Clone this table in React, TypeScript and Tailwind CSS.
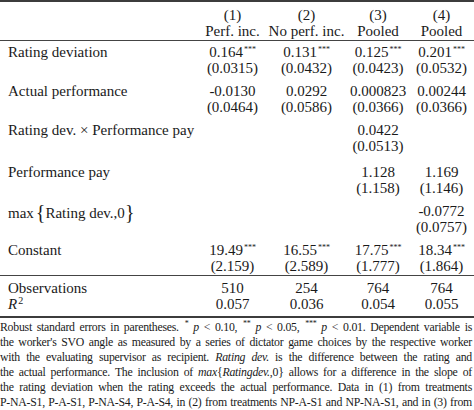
import React from "react";

const Star = ({ n }: { n: number }) => (
  <span className="relative -top-[5px] text-[8px] leading-none ml-[1px]">{"*".repeat(n)}</span>
);

type Cell = { v?: React.ReactNode; se?: string };

const Pair = ({ label, cells, extra }: { label: React.ReactNode; cells: Cell[]; extra?: string }) => (
  <div className={`grid grid-cols-[196px_73px_75px_68px_59px] h-[39px] ${extra ?? ""}`}>
    <div className="pl-2 h-4 leading-4 whitespace-nowrap">{label}</div>
    {cells.map((c, i) => (
      <div key={i} className="flex flex-col items-center">
        <div className="h-4 leading-4 whitespace-nowrap">{c.v}</div>
        <div className="h-4 leading-4 whitespace-nowrap">{c.se}</div>
      </div>
    ))}
  </div>
);

const NoteLine = ({ children, last }: { children: React.ReactNode; last?: boolean }) => (
  <div className={`h-[15px] leading-[15px] whitespace-nowrap ${last ? "" : "text-justify [text-align-last:justify]"}`}>
    {children}
  </div>
);

export default function App() {
  return (
    <div className="w-[474px] h-[410px] overflow-hidden bg-white text-[#1a1a1a] font-['Liberation_Serif',serif]">
      <div className="h-[2px] bg-[#3c3c3c]" />
      <div className="text-[15px]">
        <div className="grid grid-cols-[196px_73px_75px_68px_59px] pt-[6px] h-[38px]">
          <div />
          {[
            ["(1)", "Perf. inc."],
            ["(2)", "No perf. inc."],
            ["(3)", "Pooled"],
            ["(4)", "Pooled"],
          ].map(([a, b]) => (
            <div key={a} className="flex flex-col items-center">
              <div className="h-[15px] leading-[15px] whitespace-nowrap">{a}</div>
              <div className="h-4 leading-4 whitespace-nowrap">{b}</div>
            </div>
          ))}
        </div>
        <div className="h-px bg-[#444]" />
        <div className="pt-[3px]">
          <Pair
            label="Rating deviation"
            cells={[
              { v: <>0.164<Star n={3} /></>, se: "(0.0315)" },
              { v: <>0.131<Star n={3} /></>, se: "(0.0432)" },
              { v: <>0.125<Star n={3} /></>, se: "(0.0423)" },
              { v: <>0.201<Star n={3} /></>, se: "(0.0532)" },
            ]}
          />
          <Pair
            label="Actual performance"
            cells={[
              { v: "-0.0130", se: "(0.0464)" },
              { v: "0.0292", se: "(0.0586)" },
              { v: "0.000823", se: "(0.0366)" },
              { v: "0.00244", se: "(0.0366)" },
            ]}
          />
          <Pair
            label="Rating dev. × Performance pay"
            extra="h-[42px]"
            cells={[{}, {}, { v: "0.0422", se: "(0.0513)" }, {}]}
          />
          <Pair
            label="Performance pay"
            cells={[{}, {}, { v: "1.128", se: "(1.158)" }, { v: "1.169", se: "(1.146)" }]}
          />
          <Pair
            label={
              <span className="inline-flex items-center">
                max<span className="text-[20px] leading-none font-light relative -top-[1px] ml-[2px]">{"{"}</span>Rating dev.,0
                <span className="text-[20px] leading-none font-light relative -top-[1px]">{"}"}</span>
              </span>
            }
            cells={[{}, {}, {}, { v: "-0.0772", se: "(0.0757)" }]}
          />
          <div className="grid grid-cols-[196px_73px_75px_68px_59px] h-[33px]">
            <div className="pl-2 h-4 leading-4">Constant</div>
            {[
              ["19.49", "(2.159)"],
              ["16.55", "(2.589)"],
              ["17.75", "(1.777)"],
              ["18.34", "(1.864)"],
            ].map(([a, b]) => (
              <div key={a} className="flex flex-col items-center">
                <div className="h-4 leading-4 whitespace-nowrap">
                  {a}
                  <Star n={3} />
                </div>
                <div className="h-4 leading-4 whitespace-nowrap">{b}</div>
              </div>
            ))}
          </div>
        </div>
        <div className="h-px bg-[#444]" />
        <div className="grid grid-cols-[196px_73px_75px_68px_59px] pt-[4px] h-[40px]">
          <div className="pl-2">
            <div className="h-4 leading-4">Observations</div>
            <div className="h-4 leading-4">
              <i>R</i>
              <span className="relative -top-[5px] text-[10px] leading-none ml-[1px]">2</span>
            </div>
          </div>
          {[
            ["510", "0.057"],
            ["254", "0.036"],
            ["764", "0.054"],
            ["764", "0.055"],
          ].map(([a, b], i) => (
            <div key={i} className="flex flex-col items-center">
              <div className="h-4 leading-4">{a}</div>
              <div className="h-4 leading-4">{b}</div>
            </div>
          ))}
        </div>
        <div className="h-[2px] bg-[#3c3c3c]" />
      </div>
      <div className="text-[11.8px] tracking-[-0.25px] pt-[2px] pr-[2px]">
        <NoteLine>
          Robust standard errors in parentheses. <Star n={1} /> <i>p</i> &lt; 0.10, <Star n={2} /> <i>p</i> &lt; 0.05,{" "}
          <Star n={3} /> <i>p</i> &lt; 0.01. Dependent variable is
        </NoteLine>
        <NoteLine>the worker's SVO angle as measured by a series of dictator game choices by the respective worker</NoteLine>
        <NoteLine>
          with the evaluating supervisor as recipient. <i>Rating dev.</i> is the difference between the rating and
        </NoteLine>
        <NoteLine>
          the actual performance. The inclusion of <i>max</i>{"{"}
          <i>Ratingdev.</i>,0{"}"} allows for a difference in the slope of
        </NoteLine>
        <NoteLine>the rating deviation when the rating exceeds the actual performance. Data in (1) from treatments</NoteLine>
        <NoteLine>P-NA-S1, P-A-S1, P-NA-S4, P-A-S4, in (2) from treatments NP-A-S1 and NP-NA-S1, and in (3) from</NoteLine>
        <NoteLine last>all treatments.</NoteLine>
      </div>
    </div>
  );
}
